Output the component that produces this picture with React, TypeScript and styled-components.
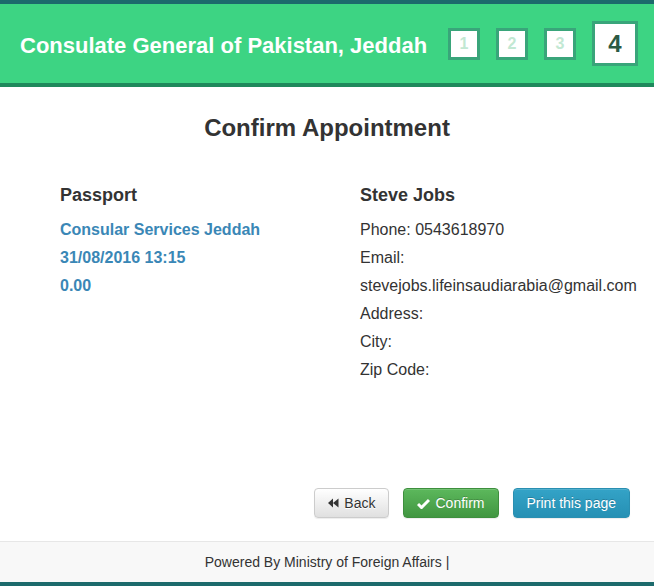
import React from 'react';
import styled, {createGlobalStyle} from 'styled-components';

const GlobalStyle = createGlobalStyle`
  html, body {
    margin: 0;
    padding: 0;
    background: #fff;
    font-family: "Liberation Sans", Arial, sans-serif;
    color: #333;
  }
  * { box-sizing: border-box; }
`

const Page = styled.div`
  display: flex;
  flex-direction: column;
  height: 100vh;
`

const Header = styled.header`
  display: flex;
  align-items: center;
  justify-content: space-between;
  height: 87px;
  padding: 0 16px 0 20px;
  background: #3dd483;
  border-top: 4px solid #1c6a6c;
  border-bottom: 4px solid #1f895c;
`

const SiteTitle = styled.h1`
  margin: 0 0 -4px;
  font-size: 22px;
  font-weight: bold;
  color: #fff;
`

const Steps = styled.div`
  display: flex;
  align-items: center;
  gap: 16px;
`

const Step = styled.div<{active?: boolean}>`
  display: flex;
  align-items: center;
  justify-content: center;
  width: ${p => (p.active ? '46px' : '32px')};
  height: ${p => (p.active ? '45px' : '32px')};
  background: #fff;
  border: 3px solid #39a57a;
  font-size: ${p => (p.active ? '24px' : '16px')};
  font-weight: bold;
  color: ${p => (p.active ? '#2c5a44' : '#c2e8d3')};
`

const Main = styled.main`
  flex: 1;
  display: flex;
  flex-direction: column;
`

const Heading = styled.h2`
  margin: 26px 0 0;
  text-align: center;
  font-size: 24px;
  font-weight: bold;
  line-height: 30px;
  color: #333;
`

const Details = styled.div`
  display: grid;
  grid-template-columns: 300px 300px;
  padding: 42px 0 0 60px;
`

const Column = styled.div`
  display: flex;
  flex-direction: column;
`

const ColTitle = styled.div`
  font-size: 18px;
  font-weight: bold;
  line-height: 20px;
  margin-bottom: 11px;
`

const Line = styled.div<{accent?: boolean}>`
  font-size: 16px;
  line-height: 28px;
  font-weight: ${p => (p.accent ? 'bold' : 'normal')};
  color: ${p => (p.accent ? '#3a87b6' : '#333')};
`

const Actions = styled.div`
  margin-top: auto;
  display: flex;
  justify-content: flex-end;
  gap: 14px;
  padding: 0 24px 23px 0;
`

const variants = {
  default: {bg: 'linear-gradient(#fff, #e0e0e0)', border: '#ccc', color: '#333'},
  success: {bg: 'linear-gradient(#5cb85c, #419641)', border: '#3e8f3e', color: '#fff'},
  info: {bg: 'linear-gradient(#34a3c7, #2690b4)', border: '#2a8fb1', color: '#fff'},
}

const Button = styled.button<{kind: keyof typeof variants}>`
  display: flex;
  align-items: center;
  gap: 5px;
  height: 30px;
  padding: 0 13px;
  font-family: inherit;
  font-size: 14px;
  border-radius: 4px;
  border: 1px solid ${p => variants[p.kind].border};
  background: ${p => variants[p.kind].bg};
  color: ${p => variants[p.kind].color};
  text-shadow: ${p => (p.kind === 'default' ? '0 1px 0 #fff' : '0 -1px 0 rgba(0,0,0,.2)')};
  box-shadow: inset 0 1px 0 rgba(255,255,255,.15), 0 1px 1px rgba(0,0,0,.075);
`

const Footer = styled.footer`
  display: flex;
  align-items: center;
  justify-content: center;
  height: 45px;
  background: #f8f8f8;
  border-top: 1px solid #e7e7e7;
  border-bottom: 4px solid #1c6a6c;
  font-size: 14px;
  color: #333;
`

const BackIcon = () => (
  <svg width="11" height="10" viewBox="0 0 11 10">
    <polygon points="0,5 5,0.5 5,9.5" fill="#333"/>
    <polygon points="5,5 10.5,0.5 10.5,9.5" fill="#333"/>
  </svg>
)

const CheckIcon = () => (
  <svg width="13" height="11" viewBox="0 0 13 11">
    <path d="M1 6 L4.5 9.5 L12 2" stroke="#fff" strokeWidth="3" fill="none"/>
  </svg>
)

const App = () => {
  return (
    <Page>
      <GlobalStyle/>
      <Header>
        <SiteTitle>Consulate General of Pakistan, Jeddah</SiteTitle>
        <Steps>
          <Step>1</Step>
          <Step>2</Step>
          <Step>3</Step>
          <Step active>4</Step>
        </Steps>
      </Header>
      <Main>
        <Heading>Confirm Appointment</Heading>
        <Details>
          <Column>
            <ColTitle>Passport</ColTitle>
            <Line accent>Consular Services Jeddah</Line>
            <Line accent>31/08/2016 13:15</Line>
            <Line accent>0.00</Line>
          </Column>
          <Column>
            <ColTitle>Steve Jobs</ColTitle>
            <Line>Phone: 0543618970</Line>
            <Line>Email:</Line>
            <Line>stevejobs.lifeinsaudiarabia@gmail.com</Line>
            <Line>Address:</Line>
            <Line>City:</Line>
            <Line>Zip Code:</Line>
          </Column>
        </Details>
        <Actions>
          <Button kind="default"><BackIcon/>Back</Button>
          <Button kind="success"><CheckIcon/>Confirm</Button>
          <Button kind="info">Print this page</Button>
        </Actions>
      </Main>
      <Footer>Powered By Ministry of Foreign Affairs |</Footer>
    </Page>
  )
}

export default App;
